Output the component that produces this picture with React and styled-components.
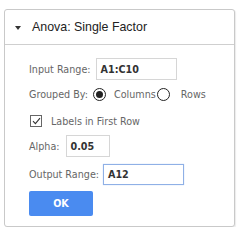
import React from 'react';
import styled, { createGlobalStyle } from 'styled-components';

const GlobalStyle = createGlobalStyle`
    html, body{
        margin:0;
        padding:0;
        background:#fff;
    }
    body{
        font-family:"DejaVu Sans", Verdana, sans-serif;
    }
`

const Panel = styled.div`
    box-sizing:border-box;
    width:231px;
    height:218px;
    margin:9px 0 0 4px;
    border:1px solid #c9c9c9;
    border-radius:3px;
    box-shadow:1px 1px 1px rgba(0,0,0,0.08);
    background:#fff;
`

const Header = styled.div`
    box-sizing:border-box;
    height:35px;
    display:flex;
    align-items:center;
    padding-left:10px;
    border-bottom:1px solid #cfcfcf;
    font-family:"Liberation Sans", Arial, sans-serif;
    font-size:12.4px;
    color:#222;
`

const Caret = styled.span`
    width:0;
    height:0;
    border-left:3px solid transparent;
    border-right:3px solid transparent;
    border-top:4px solid #333;
    margin-right:11px;
    margin-top:1px;
`

const Body = styled.div`
    padding:13px 0 0 24px;
    display:flex;
    flex-direction:column;
    align-items:flex-start;
`

const Row = styled.div`
    display:flex;
    align-items:center;
    height:${p => p.$h || 22}px;
    margin-top:${p => p.$mt || 0}px;
`

const Label = styled.span`
    font-size:9.6px;
    color:#666;
    white-space:nowrap;
    margin-right:${p => p.$mr || 0}px;
`

const TextBox = styled.div`
    box-sizing:border-box;
    width:${p => p.$w}px;
    height:${p => p.$h || 22}px;
    border:1px solid ${p => p.$focus ? '#8fb0e6' : '#d6d6d6'};
    box-shadow:${p => p.$focus ? '0 0 1px #b9cdf0' : 'none'};
    display:flex;
    align-items:center;
    padding-left:4px;
    font-size:9.6px;
    font-weight:700;
    color:#333;
`

const Radio = styled.span`
    box-sizing:border-box;
    width:13px;
    height:13px;
    border-radius:50%;
    border:1.3px solid #222;
    display:inline-flex;
    align-items:center;
    justify-content:center;
    margin:0 ${p => p.$mr}px 0 ${p => p.$ml}px;
    &::after{
        content:'';
        width:7px;
        height:7px;
        border-radius:50%;
        background:${p => p.$on ? '#222' : 'transparent'};
    }
`

const Check = styled.span`
    box-sizing:border-box;
    width:12px;
    height:12px;
    border:1px solid #666;
    margin:0 9px 0 1px;
    display:inline-flex;
    align-items:center;
    justify-content:center;
`

const OkButton = styled.button`
    width:64px;
    height:25px;
    margin-top:6px;
    border:none;
    border-radius:2px;
    background:#4a8bf0;
    color:#fff;
    font-family:"DejaVu Sans", Verdana, sans-serif;
    font-weight:700;
    font-size:9.6px;
    padding:0;
`

const App = () => {
    return (
        <>
            <GlobalStyle/>
            <Panel>
                <Header>
                    <Caret/>
                    Anova: Single Factor
                </Header>
                <Body>
                    <Row>
                        <Label $mr={5}>Input Range:</Label>
                        <TextBox $w={81}>A1:C10</TextBox>
                    </Row>
                    <Row $mt={3}>
                        <Label>Grouped By:</Label>
                        <Radio $on $ml={5} $mr={8}/>
                        <Label>Columns</Label>
                        <Radio $ml={1} $mr={11}/>
                        <Label>Rows</Label>
                    </Row>
                    <Row $mt={5}>
                        <Check>
                            <svg width="9" height="8" viewBox="0 0 9 8">
                                <path d="M1 4.2 L3.4 6.6 L8 1.2" fill="none" stroke="#333" strokeWidth="1.1"/>
                            </svg>
                        </Check>
                        <Label>Labels in First Row</Label>
                    </Row>
                    <Row $mt={3}>
                        <Label $mr={6}>Alpha:</Label>
                        <TextBox $w={44}>0.05</TextBox>
                    </Row>
                    <Row $mt={7} $h={21}>
                        <Label $mr={4}>Output Range:</Label>
                        <TextBox $w={81} $h={21} $focus>A12</TextBox>
                    </Row>
                    <OkButton>OK</OkButton>
                </Body>
            </Panel>
        </>
    );
};

export default App;
